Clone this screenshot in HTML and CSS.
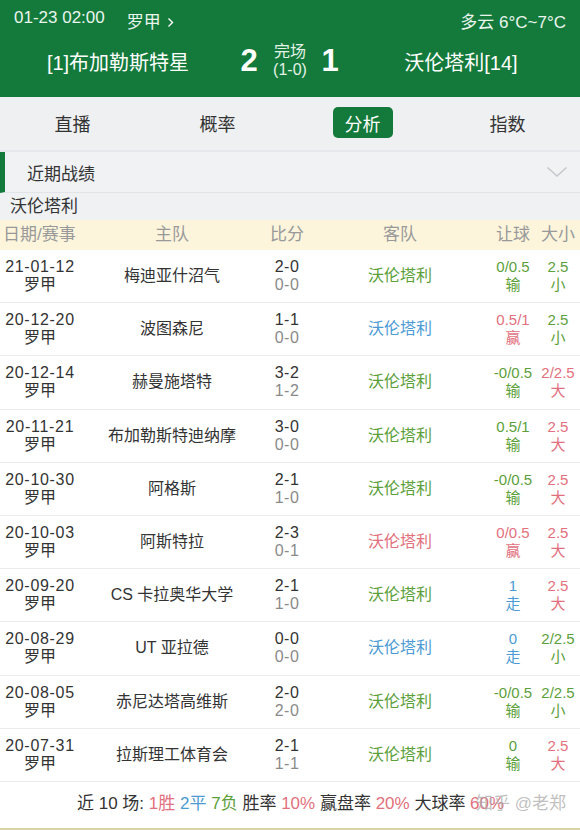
FILE: index.html
```html
<!DOCTYPE html>
<html lang="zh-CN">
<head>
  <meta charset="UTF-8">
  <title>比赛分析</title>
  <link rel="stylesheet" href="styles.css">
</head>
<body>

  <div class="match-head">
    <div class="meta">
      <div class="meta-left">
        <span>01-23 02:00</span>
        <span class="league">罗甲
          <svg width="7" height="11" viewBox="0 0 7 11"><polyline points="1.5,1.5 5.5,5.5 1.5,9.5" fill="none" stroke="#fff" stroke-width="1.4"/></svg>
        </span>
      </div>
      <span>多云 6°C~7°C</span>
    </div>
    <div class="teams">
      <div class="team">[1]布加勒斯特星</div>
      <div class="goal">2</div>
      <div class="status">
        <span>完场</span>
        <span>(1-0)</span>
      </div>
      <div class="goal">1</div>
      <div class="team">沃伦塔利[14]</div>
    </div>
  </div>

  <div class="tabs">
    <div class="tab">直播</div>
    <div class="tab">概率</div>
    <div class="tab"><span class="pill">分析</span></div>
    <div class="tab">指数</div>
  </div>

  <div class="section-title">
    <span>近期战绩</span>
    <svg width="22" height="12" viewBox="0 0 22 12"><polyline points="1.5,1.5 11,10 20.5,1.5" fill="none" stroke="#c4c7cb" stroke-width="1.5"/></svg>
  </div>

  <div class="team-label">沃伦塔利</div>

  <div class="records">
    <div class="row head">
      <div class="cell date">日期/赛事</div>
      <div class="cell">主队</div>
      <div class="cell">比分</div>
      <div class="cell">客队</div>
      <div class="cell">让球</div>
      <div class="cell">大小</div>
    </div>
  </div>

  <div class="summary">
    近 10 场: <span class="red">1胜</span> <span class="blue">2平</span> <span class="green">7负</span> 胜率 <span class="red">10%</span> 赢盘率 <span class="red">20%</span> 大球率 <span class="red">60%</span>
    <span class="watermark">知乎 @老郑</span>
  </div>

  <script src="app.js"></script>
</body>
</html>
```

FILE: styles.css
```css
* {
  box-sizing: border-box;
}
body {
  margin: 0;
  width: 580px;
  font-family: "Liberation Sans", "Noto Sans CJK SC", sans-serif;
  color: #333;
  background: #fff;
}

/* match header */
.match-head {
  background: #137a3b;
  color: #fff;
  height: 97px;
  padding-top: 9px;
}
.meta {
  display: flex;
  justify-content: space-between;
  align-items: center;
  padding: 0 14px;
  font-size: 17px;
  color: #eaf5ee;
  height: 22px;
}
.meta-left {
  display: flex;
  gap: 22px;
}
.league svg {
  margin-left: 2px;
}
.teams {
  display: grid;
  grid-template-columns: 236px 26px 56px 24px 1fr;
  align-items: center;
  margin-top: 8px;
  height: 44px;
}
.team {
  text-align: center;
  font-size: 20px;
}
.goal {
  text-align: center;
  font-size: 31px;
  font-weight: bold;
}
.status {
  display: flex;
  flex-direction: column;
  align-items: center;
  font-size: 16px;
  line-height: 18px;
  color: #e4f2e8;
}

/* tabs */
.tabs {
  display: grid;
  grid-template-columns: repeat(4, 1fr);
  height: 55px;
  background: #eef0f2;
  border-bottom: 2px solid #e6e8eb;
  padding-bottom: 2px;
}
.tab {
  display: flex;
  align-items: center;
  justify-content: center;
  font-size: 18px;
  color: #333;
}
.pill {
  background: #137a3b;
  color: #fff;
  width: 60px;
  height: 31px;
  border-radius: 5px;
  display: flex;
  align-items: center;
  justify-content: center;
}

/* section */
.section-title {
  height: 41px;
  background: #f1f2f4;
  border-left: 5px solid #137a3b;
  border-bottom: 1px solid #e2e4e7;
  display: flex;
  align-items: center;
  justify-content: space-between;
  padding: 0 12px 0 22px;
  font-size: 17px;
}
.team-label {
  height: 27px;
  background: #eff1f3;
  padding-left: 10px;
  font-size: 17px;
  line-height: 27px;
}

/* records table */
.row {
  display: grid;
  grid-template-columns: 80px 184px 46px 180px 46px 44px;
  height: 53.2px;
  border-bottom: 1px solid #ececec;
  font-size: 16px;
  line-height: 18px;
}
.row.head {
  height: 30px;
  background: #fcf5dc;
  color: #999;
  font-size: 17px;
  border-bottom: none;
}
.cell {
  display: flex;
  flex-direction: column;
  align-items: center;
  justify-content: center;
  white-space: nowrap;
}
.head .date {
  align-items: flex-start;
  padding-left: 3px;
}
.date span:first-child {
  letter-spacing: 0.7px;
}
.score {
  letter-spacing: 0.5px;
}
.half {
  color: #8a8a8a;
}
.odds {
  font-size: 15px;
}

.green { color: #5c9f3b; }
.red { color: #e2707d; }
.blue { color: #4c9bd4; }

/* footer */
.summary {
  position: relative;
  height: 48px;
  padding-left: 77px;
  font-size: 17px;
  line-height: 44px;
  border-bottom: 2px solid #d9d4a8;
  white-space: nowrap;
}
.watermark {
  position: absolute;
  left: 476px;
  top: 0;
  color: rgba(170, 170, 170, 0.75);
  font-size: 17px;
}
```

FILE: app.js
```js
// recent matches of 沃伦塔利
const games = [
  { date: "21-01-12", home: "梅迪亚什沼气", ft: "2-0", ht: "0-0", away: "green", hc: ["0/0.5", "输", "green"], ou: ["2.5", "小", "green"] },
  { date: "20-12-20", home: "波图森尼", ft: "1-1", ht: "0-0", away: "blue", hc: ["0.5/1", "赢", "red"], ou: ["2.5", "小", "green"] },
  { date: "20-12-14", home: "赫曼施塔特", ft: "3-2", ht: "1-2", away: "green", hc: ["-0/0.5", "输", "green"], ou: ["2/2.5", "大", "red"] },
  { date: "20-11-21", home: "布加勒斯特迪纳摩", ft: "3-0", ht: "0-0", away: "green", hc: ["0.5/1", "输", "green"], ou: ["2.5", "大", "red"] },
  { date: "20-10-30", home: "阿格斯", ft: "2-1", ht: "1-0", away: "green", hc: ["-0/0.5", "输", "green"], ou: ["2.5", "大", "red"] },
  { date: "20-10-03", home: "阿斯特拉", ft: "2-3", ht: "0-1", away: "red", hc: ["0/0.5", "赢", "red"], ou: ["2.5", "大", "red"] },
  { date: "20-09-20", home: "CS 卡拉奥华大学", ft: "2-1", ht: "1-0", away: "green", hc: ["1", "走", "blue"], ou: ["2.5", "大", "red"] },
  { date: "20-08-29", home: "UT 亚拉德", ft: "0-0", ht: "0-0", away: "blue", hc: ["0", "走", "blue"], ou: ["2/2.5", "小", "green"] },
  { date: "20-08-05", home: "赤尼达塔高维斯", ft: "2-0", ht: "2-0", away: "green", hc: ["-0/0.5", "输", "green"], ou: ["2/2.5", "小", "green"] },
  { date: "20-07-31", home: "拉斯理工体育会", ft: "2-1", ht: "1-1", away: "green", hc: ["0", "输", "green"], ou: ["2.5", "大", "red"] }
];

const table = document.querySelector(".records");

games.forEach(g => {
  const row = document.createElement("div");
  row.className = "row";
  row.innerHTML = `
    <div class="cell date"><span>${g.date}</span><span>罗甲</span></div>
    <div class="cell">${g.home}</div>
    <div class="cell score"><span>${g.ft}</span><span class="half">${g.ht}</span></div>
    <div class="cell ${g.away}">沃伦塔利</div>
    <div class="cell odds ${g.hc[2]}"><span>${g.hc[0]}</span><span>${g.hc[1]}</span></div>
    <div class="cell odds ${g.ou[2]}"><span>${g.ou[0]}</span><span>${g.ou[1]}</span></div>
  `;
  table.appendChild(row);
});
```
